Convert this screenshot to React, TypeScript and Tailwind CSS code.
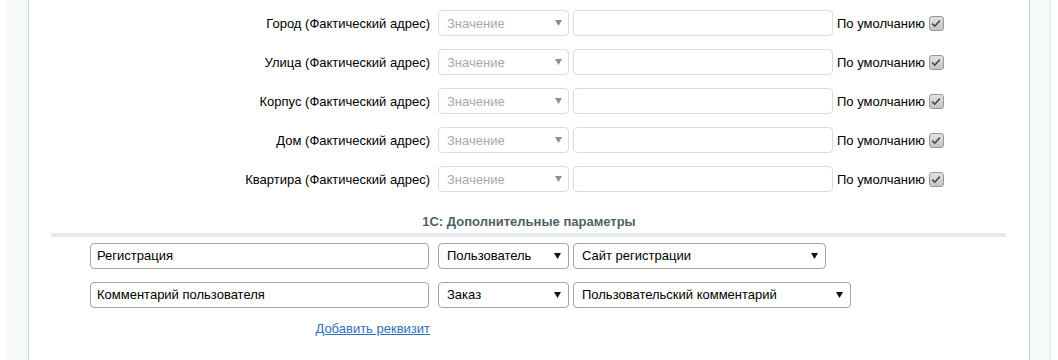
import React from "react";

const rows = ["Город", "Улица", "Корпус", "Дом", "Квартира"];

function Check() {
  return (
    <span className="inline-flex h-[15px] w-[15px] items-center justify-center rounded-[3px] border border-[#979797] bg-gradient-to-b from-[#e2e2e2] to-[#c4c4c4]">
      <svg width="10" height="9" viewBox="0 0 10 9">
        <path d="M1.2 4.6 L3.8 7.2 L8.8 1.6" fill="none" stroke="#474747" strokeWidth="1.6" />
      </svg>
    </span>
  );
}

function Tri({ color }: { color: string }) {
  return (
    <svg width="7" height="6" viewBox="0 0 7 6" className="shrink-0">
      <path d="M0 0 H7 L3.5 6 Z" fill={color} />
    </svg>
  );
}

export default function App() {
  return (
    <div className="h-[360px] w-[1058px] overflow-hidden bg-white px-[7px] font-['Liberation_Sans',Arial,sans-serif] text-[13px] text-black">
      <div className="flex h-full border-r border-[#dfe6e8] bg-[#f5f9f9] pl-[21px] pr-[20px]">
        <div className="h-full w-[1002px] border-x border-[#c9d3d6] bg-white">
          <div className="flex flex-col gap-[13px] pt-[10px]">
            {rows.map((r) => (
              <div key={r} className="flex h-[26px] items-center">
                <div className="w-[401px] pt-[2px] text-right">{r} (Фактический адрес)</div>
                <div className="ml-[8px] flex h-[26px] w-[131px] items-center justify-between rounded-[4px] border border-[#dcdcdc] pl-[8px] pr-[6px] text-[#a9a9a9]">
                  <span className="pt-[2px]">Значение</span>
                  <Tri color="#8e8e8e" />
                </div>
                <div className="ml-[4px] h-[26px] w-[260px] rounded-[4px] border border-[#dcdcdc]" />
                <span className="ml-[4px] pt-[2px]">По умолчанию</span>
                <span className="ml-[4px] flex items-center">
                  <Check />
                </span>
              </div>
            ))}
          </div>
          <div className="mt-[22px] h-[16px] text-center font-bold leading-[16px] text-[#4f5f66]">
            1С: Дополнительные параметры
          </div>
          <div className="ml-[22px] mr-[23px] mt-[3px] h-[4px] bg-[#e6e9e9]" />
          <div className="mt-[6px] flex flex-col gap-[13px]">
            <div className="flex h-[26px] items-center">
              <div className="ml-[61px] flex h-[26px] w-[339px] items-center rounded-[4px] border border-[#a3a3a3] px-[6px]">
                Регистрация
              </div>
              <div className="ml-[9px] flex h-[26px] w-[131px] items-center justify-between rounded-[4px] border border-[#a3a3a3] pl-[8px] pr-[7px]">
                <span>Пользователь</span>
                <Tri color="#111" />
              </div>
              <div className="ml-[4px] flex h-[26px] w-[253px] items-center justify-between rounded-[4px] border border-[#a3a3a3] pl-[8px] pr-[7px]">
                <span>Сайт регистрации</span>
                <Tri color="#111" />
              </div>
            </div>
            <div className="flex h-[26px] items-center">
              <div className="ml-[61px] flex h-[26px] w-[339px] items-center rounded-[4px] border border-[#a3a3a3] px-[6px]">
                Комментарий пользователя
              </div>
              <div className="ml-[9px] flex h-[26px] w-[131px] items-center justify-between rounded-[4px] border border-[#a3a3a3] pl-[8px] pr-[7px]">
                <span>Заказ</span>
                <Tri color="#111" />
              </div>
              <div className="ml-[4px] flex h-[26px] w-[278px] items-center justify-between rounded-[4px] border border-[#a3a3a3] pl-[8px] pr-[7px]">
                <span>Пользовательский комментарий</span>
                <Tri color="#111" />
              </div>
            </div>
          </div>
          <div className="mt-[13px] flex w-[401px] justify-end leading-[16px]">
            <a className="text-[#2f6fbd] underline">Добавить реквизит</a>
          </div>
        </div>
      </div>
    </div>
  );
}
